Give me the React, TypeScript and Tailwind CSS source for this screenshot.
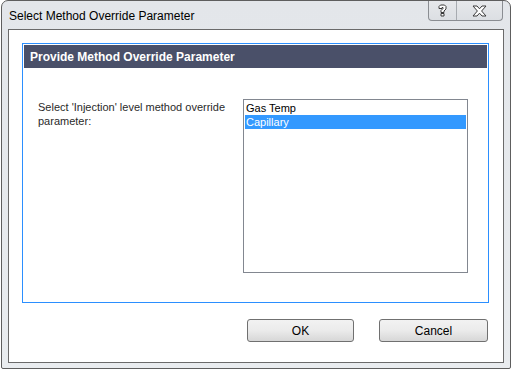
import React from "react";

const HelpGlyph = () => (
  <svg width="11" height="13" viewBox="0 0 11 13">
    <path
      d="M2 2.5 L3.5 1 H7.5 L9 2.5 V5 L7 7 V8.5 H4 V6.5 L6 4.5 V3.5 H5 V4.5 H2 Z M4 9.5 H7 V12 H4 Z"
      fill="#fff"
      stroke="#3a3a3a"
      strokeWidth="1"
      strokeLinejoin="round"
    />
  </svg>
);

const CloseGlyph = () => (
  <svg width="15" height="12" viewBox="0 0 15 12">
    <path
      d="M1 1 H5 L7.5 3.8 L10 1 H14 L9.6 6 L14 11 H10 L7.5 8.2 L5 11 H1 L5.4 6 Z"
      fill="#fff"
      stroke="#3a3a3a"
      strokeWidth="1"
      strokeLinejoin="round"
    />
  </svg>
);

export default function App() {
  return (
    <div
      className="w-[512px] h-[370px] bg-white pl-[1px] pr-[1px] overflow-hidden"
      style={{ fontFamily: '"Liberation Sans", Arial, sans-serif' }}
    >
      <div className="h-[369px] border border-[#5e5e5e] rounded-t-[7px] rounded-b-[2px] bg-gradient-to-b from-[#e3e6ea] to-[#e9ecef] flex flex-col px-[6px] pb-[5px]">
        {/* title bar */}
        <div className="h-[28px] flex items-start justify-between shrink-0">
          <div className="pl-[1px] pt-[7px] text-[12px] text-black leading-[16px]">
            Select Method Override Parameter
          </div>
          <div className="flex h-[20px] mr-[1px] border border-t-0 border-[#8a8d92] rounded-b-[4px] bg-gradient-to-b from-[#e6e8eb] to-[#dcdfe3]">
            <div className="w-[28px] flex items-center justify-center border-r border-[#a7abb0]">
              <HelpGlyph />
            </div>
            <div className="w-[45px] flex items-center justify-center">
              <CloseGlyph />
            </div>
          </div>
        </div>
        {/* client */}
        <div className="flex-1 border border-[#6a6a6a] bg-white pt-[13px] pl-[13px] pr-[14px] flex flex-col">
          <div className="h-[260px] border border-[#2b8fff] p-[1px] flex flex-col">
            <div className="h-[23px] bg-[#4a5069] flex items-center pl-[6px] text-white font-bold text-[12px]">
              Provide Method Override Parameter
            </div>
            <div className="flex-1 flex justify-between pt-[31px] pl-[14px] pr-[19px] pb-[28px]">
              <div className="pt-[1px] text-[11px] leading-[14px] text-[#2a2a2a] w-[200px]">
                Select 'Injection' level method override parameter:
              </div>
              <div className="w-[225px] border border-[#828790] p-[1px] text-[11px] leading-[14px]">
                <div className="px-[1px] text-black">Gas Temp</div>
                <div className="px-[1px] bg-[#3399ff] text-white">Capillary</div>
              </div>
            </div>
          </div>
          <div className="flex justify-end gap-[25px] pt-[16px] pr-[1px]">
            <button className="w-[107px] h-[23px] border border-[#707070] rounded-[3px] bg-gradient-to-b from-[#f2f2f2] via-[#ebebeb] to-[#d7d7d7] text-[12px] text-black">
              OK
            </button>
            <button className="w-[109px] h-[23px] border border-[#707070] rounded-[3px] bg-gradient-to-b from-[#f2f2f2] via-[#ebebeb] to-[#d7d7d7] text-[12px] text-black">
              Cancel
            </button>
          </div>
        </div>
      </div>
    </div>
  );
}
